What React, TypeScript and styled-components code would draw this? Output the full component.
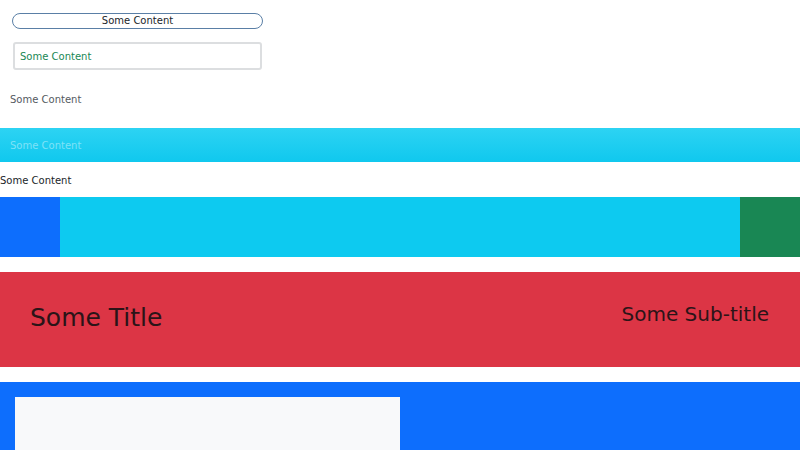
import React from "react";
import styled, { createGlobalStyle } from "styled-components";

const GlobalStyle = createGlobalStyle`
  html, body {
    margin: 0;
    padding: 0;
    background: #ffffff;
    font-family: "DejaVu Sans", "Liberation Sans", sans-serif;
    font-size: 10px;
    color: #212529;
  }
  * { box-sizing: border-box; }
`;

const Page = styled.div`
  width: 800px;
  height: 450px;
  overflow: hidden;
  display: flex;
  flex-direction: column;
`;

const Controls = styled.div`
  display: flex;
  flex-direction: column;
  align-items: flex-start;
  padding: 13px 0 0 12px;
  gap: 13px;
`;

const PillButton = styled.button`
  width: 251px;
  height: 16px;
  padding: 0;
  border: 1px solid #5a7fa6;
  border-radius: 8px;
  background: #ffffff;
  font-family: inherit;
  font-size: 10px;
  line-height: 14px;
  color: #212529;
  text-align: center;
`;

const TextField = styled.div`
  width: 249px;
  height: 28px;
  margin-left: 1px;
  padding: 0 5px;
  display: flex;
  align-items: center;
  border: 2px solid #dcdee0;
  border-radius: 3px;
  color: #198754;
`;

const Caption = styled.div<{ $indent: number; $color: string; $height: number }>`
  height: ${(p) => p.$height}px;
  display: flex;
  align-items: center;
  padding: 1px 0 0 ${(p) => p.$indent}px;
  color: ${(p) => p.$color};
`;

const GradientBand = styled.div`
  height: 34px;
  display: flex;
  align-items: center;
  padding-left: 10px;
  background: linear-gradient(#2dd3f3, #10c8ee);
  color: #7ee2f7;
`;

const ColorRow = styled.div`
  height: 60px;
  display: flex;
`;

const Block = styled.div<{ $color: string; $grow?: boolean }>`
  flex: ${(p) => (p.$grow ? "1" : "0 0 60px")};
  background: ${(p) => p.$color};
`;

const Banner = styled.div`
  margin-top: 15px;
  height: 95px;
  display: flex;
  align-items: center;
  justify-content: space-between;
  padding: 0 31px 0 30px;
  background: #dc3545;
  color: #2b1418;
`;

const Title = styled.h1`
  margin: 0 0 4px;
  font-size: 25px;
  font-weight: normal;
`;

const SubTitle = styled.h2`
  margin: 0 0 12px;
  font-size: 20px;
  font-weight: normal;
`;

const BluePanel = styled.div`
  margin-top: 15px;
  flex: 1;
  padding: 15px 0 0 15px;
  background: #0d6efd;
`;

const Card = styled.div`
  width: 385px;
  height: 100%;
  background: #f8f9fa;
`;

const App = () => {
  return (
    <>
      <GlobalStyle />
      <Page>
        <Controls>
          <PillButton>Some Content</PillButton>
          <TextField>Some Content</TextField>
        </Controls>
        <Caption $indent={10} $color="#555a5f" $height={58}>
          Some Content
        </Caption>
        <GradientBand>Some Content</GradientBand>
        <Caption $indent={0} $color="#212529" $height={35}>
          Some Content
        </Caption>
        <ColorRow>
          <Block $color="#0d6efd" />
          <Block $color="#0dcaf0" $grow />
          <Block $color="#198754" />
        </ColorRow>
        <Banner>
          <Title>Some Title</Title>
          <SubTitle>Some Sub-title</SubTitle>
        </Banner>
        <BluePanel>
          <Card />
        </BluePanel>
      </Page>
    </>
  );
};

export default App;
